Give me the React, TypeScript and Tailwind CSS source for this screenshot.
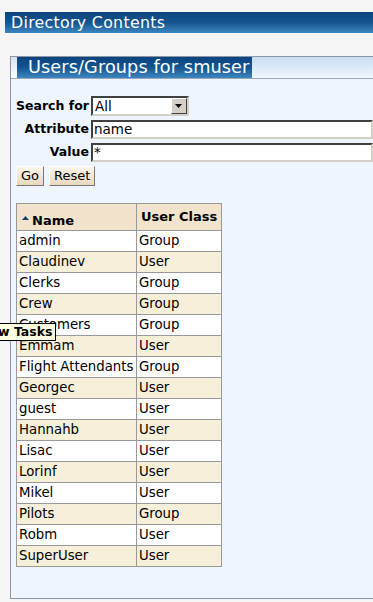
const rows: [string, string][] = [
  ['admin', 'Group'],
  ['Claudinev', 'User'],
  ['Clerks', 'Group'],
  ['Crew', 'Group'],
  ['Customers', 'Group'],
  ['Emmam', 'User'],
  ['Flight Attendants', 'Group'],
  ['Georgec', 'User'],
  ['guest', 'User'],
  ['Hannahb', 'User'],
  ['Lisac', 'User'],
  ['Lorinf', 'User'],
  ['Mikel', 'User'],
  ['Pilots', 'Group'],
  ['Robm', 'User'],
  ['SuperUser', 'User'],
]

export default function App() {
  return (
    <div className="relative w-[373px] h-[602px] overflow-hidden bg-[#f5f5f5] text-[13px] text-black" style={{ fontFamily: '"DejaVu Sans", Verdana, sans-serif' }}>
      <div className="h-[12px]" />
      <div className="ml-[5px] h-[21px] pl-[6px] flex items-center text-white text-[15.8px] tracking-[0.3px] bg-gradient-to-b from-[#0a447f] via-[#15558f] to-[#3d86c0]">
        Directory Contents
      </div>
      <div className="ml-[10px] mt-[23px] h-[543px] border border-[#8c96a4] border-r-0 bg-[#eef5ff] flex flex-col">
        <div className="h-[22px] flex border-b border-[#9aa8ba] bg-gradient-to-b from-[#c9dcf1] to-[#f0f8ff]">
          <div className="w-[6px] bg-gradient-to-b from-[#d8e4f0] to-[#ffffff]" />
          <div className="pl-[11px] pr-[3px] flex items-center text-white text-[17.7px] tracking-[0.1px] bg-gradient-to-b from-[#0a447f] via-[#15558f] to-[#3d86c0]">
            Users/Groups for smuser
          </div>
        </div>
        <div className="pl-[5px] pt-[17px]">
          <div className="grid grid-cols-[auto_1fr] gap-y-[4px] items-center">
            <div className="font-bold text-[12.5px] text-right pr-[2px]">Search for</div>
            <div className="flex">
              <div className="w-[98px] h-[20px] bg-white border-2 border-t-[#404040] border-l-[#404040] border-b-[#d4d0c8] border-r-[#d4d0c8] flex items-center justify-between">
                <span className="pl-[2px] text-[13.5px]">All</span>
                <span className="w-[16px] h-[16px] bg-[#d4d0c8] border border-t-white border-l-white border-b-[#404040] border-r-[#404040] flex items-center justify-center">
                  <svg width="7" height="4" viewBox="0 0 7 4"><path d="M0 0h7L3.5 4z" fill="#000" /></svg>
                </span>
              </div>
            </div>
            <div className="font-bold text-[12.5px] text-right pr-[2px]">Attribute</div>
            <div className="h-[19px] bg-white border-2 border-t-[#404040] border-l-[#404040] border-b-[#d4d0c8] border-r-[#d4d0c8] pl-[1px] flex items-center text-[13.5px]">name</div>
            <div className="font-bold text-[12.5px] text-right pr-[2px]">Value</div>
            <div className="h-[19px] bg-white border-2 border-t-[#404040] border-l-[#404040] border-b-[#d4d0c8] border-r-[#d4d0c8] pl-[1px] flex items-center text-[13.5px]">*</div>
          </div>
          <div className="flex gap-[5px] mt-[4px]">
            <div className="h-[20px] px-[4px] flex items-center text-[13px] bg-gradient-to-b from-[#fbf5ea] to-[#ead8bf] border border-t-white border-l-white border-b-[#777] border-r-[#777]">Go</div>
            <div className="h-[20px] px-[4px] flex items-center text-[13px] bg-gradient-to-b from-[#fbf5ea] to-[#ead8bf] border border-t-white border-l-white border-b-[#777] border-r-[#777]">Reset</div>
          </div>
          <table className="mt-[17px] border-collapse border border-[#999] text-[13.3px] table-fixed w-[206px]">
            <thead>
              <tr className="h-[27px] bg-[#f2e4cc]">
                <th className="w-[120px] border border-[#999] text-left font-bold pl-[5px] pt-[2px] text-[13px]">
                  <span className="inline-flex items-center gap-[3px]">
                    <svg width="7" height="4" viewBox="0 0 7 4" className="-mt-[5px]"><path d="M0 4h7L3.5 0z" fill="#1a3f66" /></svg>
                    Name
                  </span>
                </th>
                <th className="border border-[#999] text-left font-bold pl-[4px] text-[13px]">User Class</th>
              </tr>
            </thead>
            <tbody>
              {rows.map(([n, c], i) => (
                <tr key={n} className={`h-[21px] ${i % 2 === 0 ? 'bg-white' : 'bg-[#f6f0da]'}`}>
                  <td className="border border-[#999] pl-[2px] whitespace-nowrap overflow-hidden">{n}</td>
                  <td className="border border-[#999] pl-[2px]">{c}</td>
                </tr>
              ))}
            </tbody>
          </table>
        </div>
      </div>
      <div className="absolute left-0 top-[323px] h-[18px] pr-[3px] bg-[#ffffe1] border border-black border-l-0 flex items-center font-bold text-[12.5px]">
        <span className="-ml-[2px]">w Tasks</span>
      </div>
    </div>
  )
}
